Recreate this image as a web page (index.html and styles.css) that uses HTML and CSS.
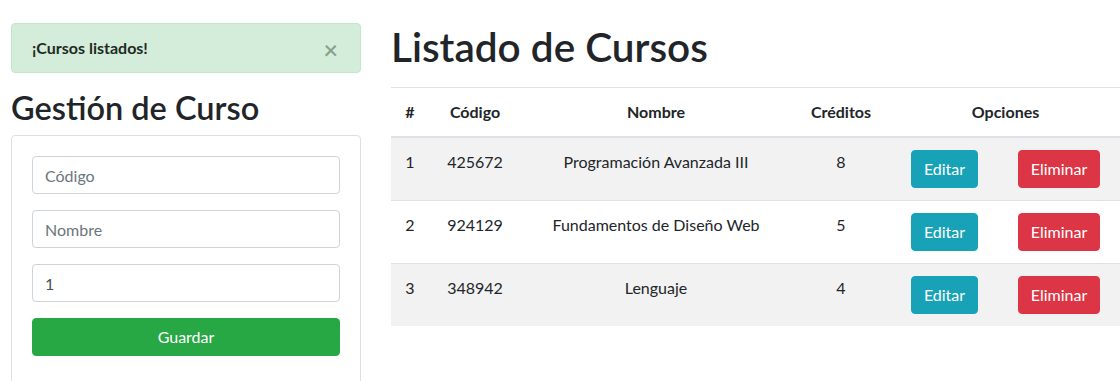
FILE: index.html
```html
<!DOCTYPE html>
<html lang="es">
<head>
<meta charset="utf-8">
<title>Cursos</title>
<link rel="stylesheet" href="styles.css">
</head>
<body>
<div class="page">
  <aside class="side">
    <div class="alert">
      <strong>¡Cursos listados!</strong>
      <span class="close">&times;</span>
    </div>
    <h2 class="side-title">Gestión de Curso</h2>
    <div class="card">
      <input class="field" type="text" placeholder="Código">
      <input class="field" type="text" placeholder="Nombre">
      <input class="field" type="text" value="1">
      <button class="btn btn-success btn-block">Guardar</button>
    </div>
  </aside>
  <main class="main">
    <h1 class="main-title">Listado de Cursos</h1>
    <table class="table">
      <colgroup>
        <col class="c-num">
        <col class="c-cod">
        <col class="c-nom">
        <col class="c-cre">
        <col class="c-edit">
        <col class="c-del">
      </colgroup>
      <thead>
        <tr>
          <th>#</th>
          <th>Código</th>
          <th>Nombre</th>
          <th>Créditos</th>
          <th colspan="2">Opciones</th>
        </tr>
      </thead>
      <tbody>
        <tr class="odd">
          <td>1</td>
          <td>425672</td>
          <td>Programación Avanzada III</td>
          <td>8</td>
          <td><button class="btn btn-info">Editar</button></td>
          <td><button class="btn btn-danger">Eliminar</button></td>
        </tr>
        <tr>
          <td>2</td>
          <td>924129</td>
          <td>Fundamentos de Diseño Web</td>
          <td>5</td>
          <td><button class="btn btn-info">Editar</button></td>
          <td><button class="btn btn-danger">Eliminar</button></td>
        </tr>
        <tr class="odd">
          <td>3</td>
          <td>348942</td>
          <td>Lenguaje</td>
          <td>4</td>
          <td><button class="btn btn-info">Editar</button></td>
          <td><button class="btn btn-danger">Eliminar</button></td>
        </tr>
      </tbody>
    </table>
  </main>
</div>
</body>
</html>
```
FILE: styles.css
```css
* { box-sizing: border-box; }
html, body { margin: 0; padding: 0; overflow: hidden; }
body {
  font-family: Lato, "Liberation Sans", sans-serif;
  font-size: 16px;
  line-height: 24px;
  color: #212529;
  background: #fff;
}
.page {
  display: flex;
  gap: 30px;
  padding: 23px 0 0 11px;
}
.side { width: 350px; flex: none; }
.main { width: 729px; flex: none; }

.alert {
  position: relative;
  background: #d4edda;
  border: 1px solid #c3e6cb;
  border-radius: 4px;
  padding: 12px 20px;
  color: #155724;
  margin-bottom: 16px;
}
.alert strong { color: #1f2a22; font-weight: 700; }
.close {
  position: absolute;
  right: 22px;
  top: 10px;
  font-size: 25px;
  font-weight: 600;
  line-height: 30px;
  color: #86a08b;
}
.side-title {
  font-size: 32.5px;
  line-height: 38px;
  font-weight: 600;
  margin: 0 0 8px;
}
.card {
  border: 1px solid #dfdfdf;
  border-radius: 4px;
  padding: 20px 20px 40px;
  display: flex;
  flex-direction: column;
  gap: 16px;
}
.field {
  display: block;
  width: 100%;
  height: 38px;
  padding: 6px 12px;
  font: inherit;
  color: #495057;
  border: 1px solid #ced4da;
  border-radius: 4px;
  background: #fff;
}
.field::placeholder { color: #6c757d; }
.btn {
  font: inherit;
  color: #fff;
  border: 1px solid transparent;
  border-radius: 4px;
  padding: 6px 12px;
  line-height: 24px;
  height: 38px;
}
.btn-block { width: 100%; margin-top: 0; }
.btn-success { background: #28a745; border-color: #28a745; }
.btn-info { background: #17a2b8; border-color: #17a2b8; }
.btn-danger { background: #dc3545; border-color: #dc3545; }

.main-title {
  font-size: 40.5px;
  line-height: 48px;
  font-weight: 600;
  margin: 0 0 16px;
}
.table {
  width: 729px;
  border-collapse: collapse;
  table-layout: fixed;
  text-align: center;
}
.table th, .table td {
  padding: 12px;
  vertical-align: top;
  border-top: 1px solid #dee2e6;
}
.table th { vertical-align: bottom; font-weight: 700; }
.table thead th { border-bottom: 2px solid #dee2e6; }
.table tr.odd { background: #f2f2f2; }
.c-num { width: 38px; }
.c-cod { width: 92px; }
.c-nom { width: 270px; }
.c-cre { width: 100px; }
.c-edit { width: 107px; }
.c-del { width: 122px; }
```
